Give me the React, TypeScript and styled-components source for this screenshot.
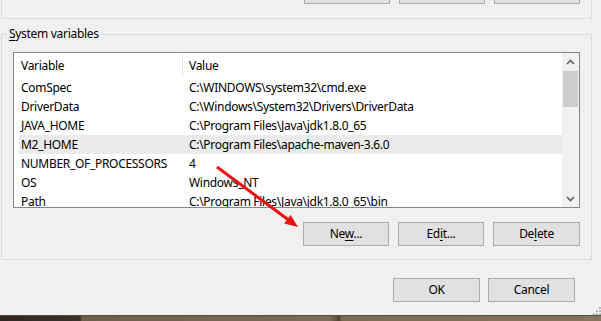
import styled, { createGlobalStyle } from 'styled-components';

interface EnvVar {
  name: string;
  value: string;
}

const systemVars: EnvVar[] = [
  { name: 'ComSpec', value: 'C:\\WINDOWS\\system32\\cmd.exe' },
  { name: 'DriverData', value: 'C:\\Windows\\System32\\Drivers\\DriverData' },
  { name: 'JAVA_HOME', value: 'C:\\Program Files\\Java\\jdk1.8.0_65' },
  { name: 'M2_HOME', value: 'C:\\Program Files\\apache-maven-3.6.0' },
  { name: 'NUMBER_OF_PROCESSORS', value: '4' },
  { name: 'OS', value: 'Windows_NT' },
  { name: 'Path', value: 'C:\\Program Files\\Java\\jdk1.8.0_65\\bin' },
];

const GlobalStyle = createGlobalStyle`
  html, body {
    margin: 0;
    padding: 0;
    background: #f0f0f0;
  }
  body {
    font-family: 'Noto Sans', 'Open Sans', sans-serif;
    font-size: 12px;
    letter-spacing: -0.3px;
    color: #000;
  }
`;

const Chevron = ({ down }: { down?: boolean }) => (
  <svg width="9" height="6" viewBox="0 0 9 6">
    <polyline
      points={down ? '1,1 4.5,4.5 8,1' : '1,5 4.5,1.5 8,5'}
      fill="none"
      stroke="#606060"
      strokeWidth="1.6"
    />
  </svg>
);

const App = () => {
  return (
    <Page>
      <GlobalStyle />
      <Dialog>
        {/* user variables group, scrolled out of view above */}
        <TopGroup>
          <ButtonRow>
            <Button aria-label="New" />
            <Button aria-label="Edit" />
            <Button aria-label="Delete" />
          </ButtonRow>
        </TopGroup>

        <Group>
          <Legend>
            <u>S</u>ystem variables
          </Legend>
          <ListBox>
            <ListArea>
              <Header>
                <HeaderCell first>Variable</HeaderCell>
                <HeaderCell>Value</HeaderCell>
              </Header>
              <Rows>
                {systemVars.map((v) => (
                  <Row key={v.name} selected={v.name === 'M2_HOME'}>
                    <NameCell>{v.name}</NameCell>
                    <ValueCell>{v.value}</ValueCell>
                  </Row>
                ))}
              </Rows>
            </ListArea>
            <ScrollBar>
              <ScrollButton>
                <Chevron />
              </ScrollButton>
              <Track>
                <Thumb />
              </Track>
              <ScrollButton>
                <Chevron down />
              </ScrollButton>
            </ScrollBar>
          </ListBox>
          <GroupButtons>
            <Button>
              Ne<u>w</u>...
            </Button>
            <Button>
              Ed<u>i</u>t...
            </Button>
            <Button width={87}>
              De<u>l</u>ete
            </Button>
          </GroupButtons>
        </Group>

        <Footer>
          <Button width={87}>OK</Button>
          <Button width={87}>Cancel</Button>
        </Footer>
        <Grip width="9" height="9" viewBox="0 0 9 9">
          {[
            [7, 1],
            [7, 4],
            [4, 4],
            [7, 7],
            [4, 7],
            [1, 7],
          ].map(([x, y]) => (
            <rect key={`${x}-${y}`} x={x} y={y} width="2" height="2" fill="#b8b8b8" />
          ))}
        </Grip>
      </Dialog>
      <Desktop />

      <Arrow width="601" height="321" viewBox="0 0 601 321">
        <line x1="217" y1="167" x2="288" y2="219.5" stroke="#ee1111" strokeWidth="3" />
        <polygon points="298,227 284.2,223.6 290.6,215" fill="#ee1111" />
      </Arrow>
    </Page>
  );
};

export default App;

const Page = styled.div`
  position: relative;
  width: 601px;
  height: 321px;
  overflow: hidden;
  display: flex;
  flex-direction: column;
`;

const Dialog = styled.div`
  position: relative;
  height: 315px;
  background: #f0f0f0;
  display: flex;
  flex-direction: column;
`;

const TopGroup = styled.div`
  box-sizing: border-box;
  height: 19px;
  width: 591px;
  margin-left: 1px;
  padding-right: 11px;
  border: 1px solid #dcdcdc;
  border-top: none;
  display: flex;
  justify-content: flex-end;
`;

const ButtonRow = styled.div`
  display: flex;
  gap: 9px;
  margin-top: -20px;
  height: 24px;
`;

const Button = styled.button<{ width?: number }>`
  box-sizing: border-box;
  width: ${({ width }) => width ?? 86}px;
  height: 24px;
  padding: 0;
  margin: 0;
  background: #e1e1e1;
  border: 1px solid #adadad;
  border-radius: 0;
  font-family: 'Noto Sans', 'Open Sans', sans-serif;
  font-size: 12px;
  letter-spacing: -0.3px;
  color: #000;
  line-height: 20px;

  u {
    text-decoration-thickness: 1px;
    text-underline-offset: 2px;
  }
`;

const Group = styled.fieldset`
  box-sizing: border-box;
  width: 591px;
  margin: 7px 0 0 1px;
  padding: 10px 11px 13px 11px;
  border: 1px solid #dcdcdc;
  min-inline-size: 0;
`;

const Legend = styled.legend`
  margin-left: -6px;
  padding: 0 2px;
  font-size: 12px;
  line-height: 16px;

  u {
    text-underline-offset: 2px;
  }
`;

const ListBox = styled.div`
  box-sizing: border-box;
  height: 156px;
  border: 1px solid #828790;
  background: #fff;
  display: grid;
  grid-template-columns: 1fr 17px;
  overflow: hidden;
`;

const ListArea = styled.div`
  overflow: hidden;
  display: flex;
  flex-direction: column;
`;

const Header = styled.div`
  display: flex;
  height: 25px;
  flex-shrink: 0;
`;

const HeaderCell = styled.div<{ first?: boolean }>`
  box-sizing: border-box;
  width: ${({ first }) => (first ? '169px' : 'auto')};
  flex: ${({ first }) => (first ? 'none' : '1')};
  padding-left: ${({ first }) => (first ? '7px' : '6px')};
  border-right: ${({ first }) => (first ? '1px solid #e5e5e5' : 'none')};
  margin: 1px 0 2px;
  display: flex;
  align-items: center;
`;

const Rows = styled.div`
  padding-left: 5px;
`;

const Row = styled.div<{ selected?: boolean }>`
  display: flex;
  height: 19px;
  align-items: center;
  background: ${({ selected }) => (selected ? '#ebebeb' : 'transparent')};
  white-space: nowrap;
`;

const NameCell = styled.div`
  box-sizing: border-box;
  width: 168px;
  padding-left: 2px;
`;

const ValueCell = styled.div`
  padding-left: 2px;
`;

const ScrollBar = styled.div`
  background: #f0f0f0;
  display: flex;
  flex-direction: column;
`;

const ScrollButton = styled.div`
  height: 17px;
  display: flex;
  align-items: center;
  justify-content: center;
  flex-shrink: 0;
`;

const Track = styled.div`
  flex: 1;
  padding: 1px 1px 0;
`;

const Thumb = styled.div`
  height: 36px;
  background: #cdcdcd;
`;

const GroupButtons = styled.div`
  display: flex;
  justify-content: flex-end;
  gap: 9px;
  margin-top: 14px;
`;

const Footer = styled.div`
  display: flex;
  justify-content: flex-end;
  gap: 8px;
  margin-top: 18px;
  padding-right: 26px;
`;

const Grip = styled.svg`
  position: absolute;
  right: 0;
  bottom: 0;
`;

const Desktop = styled.div`
  height: 6px;
  background:
    linear-gradient(90deg, #2e2822 0, #3a3129 80px, #6d5e49 82px, #7c6c55 330px, #4e4436 339px, #7a6a52 342px, #86755c 601px);
  box-shadow: inset 0 1px 0 #5a4f40;
`;

const Arrow = styled.svg`
  position: absolute;
  left: 0;
  top: 0;
  pointer-events: none;
`;
